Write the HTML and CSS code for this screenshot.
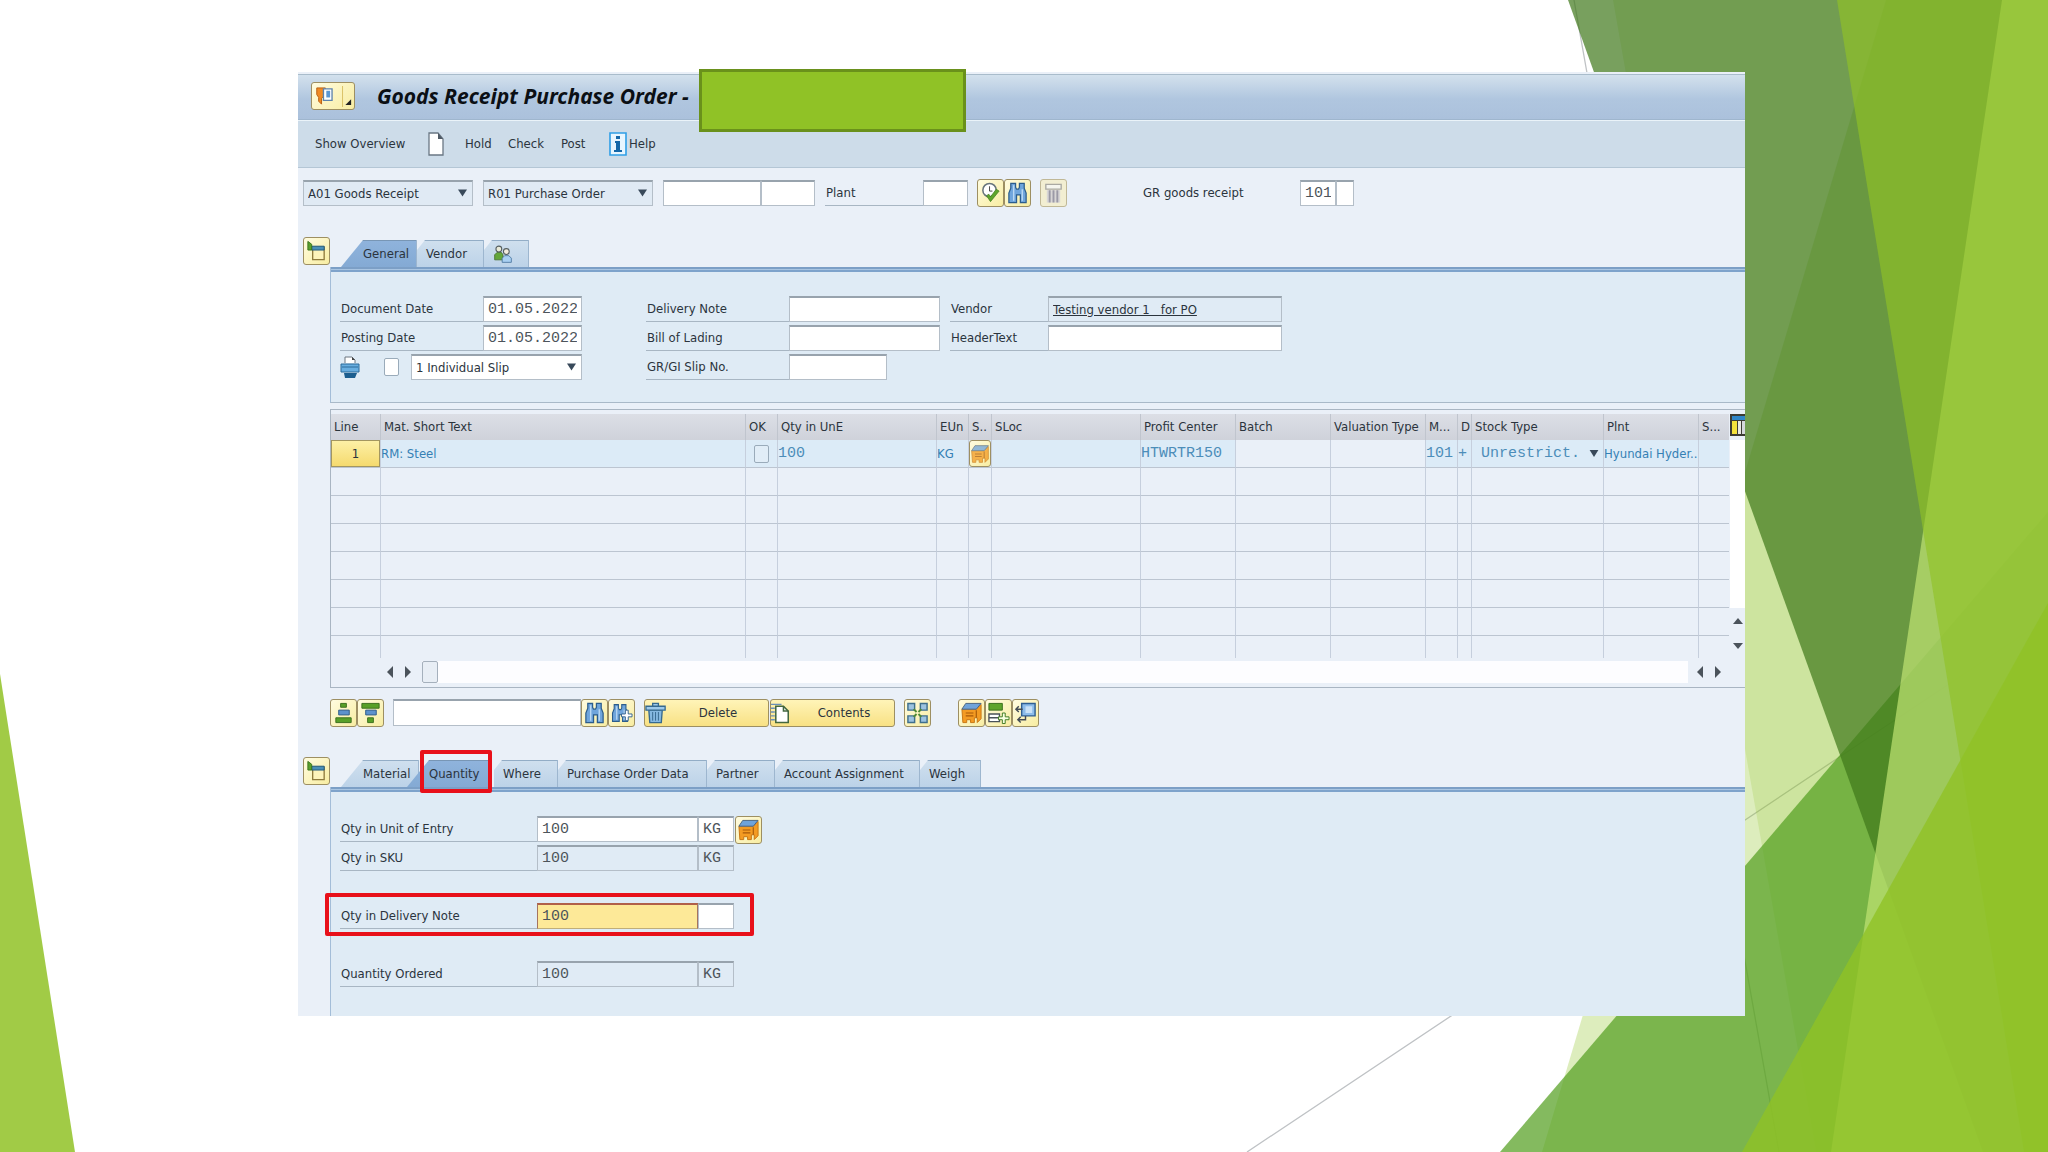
FILE: index.html
```html
<!DOCTYPE html>
<html lang="en">
<head>
<meta charset="utf-8">
<title>Goods Receipt Purchase Order</title>
<link rel="stylesheet" href="styles.css">
</head>
<body>
<svg class="defs" aria-hidden="true">
  <symbol id="i-binoc" viewBox="0 0 24 24"><path d="M5 2h5v4l1 2h2l1-2V2h5v5l2 5v10h-6v-8h-4v8H3V12l2-5z" fill="#6fa5dc" stroke="#2c5d8c" stroke-width="1.3"/><path d="M8 4v16M17 8v12" stroke="#b9d8f3" stroke-width="1.5"/></symbol>
  <symbol id="i-box" viewBox="0 0 24 24"><path d="M2 8h15l5-5v15l-4 4v-5h-3v5h-4v-3H7v3H3z" fill="#f49b22" stroke="#c87512"/><path d="M2 8l4-6h16l-5 6z" fill="#6fa3da" stroke="#49637f"/><path d="M6 12h8M6 15h8M17 9v8" stroke="#a85a08" stroke-width="1.2"/></symbol>
  <symbol id="i-folder" viewBox="0 0 24 24"><path d="M8 8h12v13H8z" fill="#fdf3ba" stroke="#8f7b3d" stroke-width="1.4"/><path d="M7 7h13v4H7z" fill="#4a8fb8" stroke="#245b7a"/><path d="M3 2l4 3v6H3z" fill="#5aa02c" stroke="#3a741c"/></symbol>
</svg>

<svg class="backdrop" viewBox="0 0 2048 1152" preserveAspectRatio="none" aria-hidden="true">
  <g stroke="#bfc2c5" stroke-width="1.3"><path d="M1574 0L1779 1152M1247 1152L2048 618"/></g>
  <path d="M1886 0H2048V1152H1542z" fill="#90c226" fill-opacity=".3"/>
  <path d="M1613 0H2048V1152H1816z" fill="#90c226" fill-opacity=".2"/>
  <path d="M1500 1152H2048V512z" fill="#54a021" fill-opacity=".72"/>
  <path d="M1568 0H2048V1152H1983z" fill="#3f7819" fill-opacity=".7"/>
  <path d="M2002 0H2048V1152H1831z" fill="#c0e474" fill-opacity=".7"/>
  <path d="M1837 0H2048V1152H2024z" fill="#90c226" fill-opacity=".65"/>
  <path d="M1742 1152H2048V603z" fill="#90c226" fill-opacity=".8"/>
  <path d="M0 674L75 1152H0z" fill="#90c226" fill-opacity=".85"/>
</svg>

<main class="window">
  <header class="titlebar">
    <button class="ybtn menu-btn" aria-label="Services"><svg viewBox="0 0 44 24"><path d="M5 3h9v7l-4 4v6l-3-3v-4L5 10z" fill="#f08a24" stroke="#b85e10"/><path d="M12 4h9v12h-9z" fill="#fff" stroke="#5d83ac" stroke-width="1.4"/><path d="M15 6h4v7h-4z" fill="#5b97d4"/><path d="M32 1v22" stroke="#d8bf62"/><path d="M41 15v6h-6z" fill="#222"/></svg></button>
    <h1>Goods Receipt Purchase Order -</h1>
    <div class="redaction"></div>
  </header>

  <nav class="appbar">
    <button class="link-btn b-overview">Show Overview</button>
    <button class="link-btn b-new" aria-label="New"><svg viewBox="0 0 18 24"><path d="M2 1h9l5 6v16H2z" fill="#fff" stroke="#6a7784" stroke-width="1.3"/><path d="M11 1v6h5z" fill="#4f5a66"/></svg></button>
    <button class="link-btn b-hold">Hold</button>
    <button class="link-btn b-check">Check</button>
    <button class="link-btn b-post">Post</button>
    <button class="link-btn b-help"><svg viewBox="0 0 18 24"><path d="M1 1h16v22H1z" fill="#e8f6ff" stroke="#2f9fe6" stroke-width="1.6"/><path d="M7 4h4v3H7zM6 9h5v9h2v2H5v-2h2v-7H6z" fill="#1467a8"/></svg>Help</button>
  </nav>

  <section class="selector">
    <select class="fld drop w170" aria-label="Action"><option>A01 Goods Receipt</option></select>
    <select class="fld drop w170" aria-label="Reference"><option>R01 Purchase Order</option></select>
    <div class="pair"><input class="fld w98" aria-label="Order"><input class="fld w54" aria-label="Item"></div>
    <div class="lined plant"><label for="plant">Plant</label><input class="fld" id="plant"></div>
    <div class="pair tools">
      <button class="ybtn" aria-label="Execute"><svg viewBox="0 0 24 24"><circle cx="11" cy="9" r="7" fill="#fff" stroke="#68757c" stroke-width="1.6"/><path d="M11 5v5h3" fill="none" stroke="#444"/><path d="M8 15l4 6 9-11-3-2-6 8-2-3z" fill="#5fa52c" stroke="#3d7a1b" stroke-width=".7"/></svg></button>
      <button class="ybtn" aria-label="Find"><svg><use href="#i-binoc"/></svg></button>
    </div>
    <button class="ybtn dim" aria-label="Delete entry"><svg viewBox="0 0 24 24"><path d="M4 3h16v5H4z" fill="#f5f5ee" stroke="#aaa9a2" stroke-width="1.4"/><path d="M5 9h14v13H5z" fill="#d8d6d6"/><path d="M8 9v13M12 9v13M16 9v13" stroke="#9b99a6" stroke-width="2"/></svg></button>
    <label class="gr" for="mvt">GR goods receipt</label>
    <div class="pair"><input class="fld mono w36" id="mvt" value="101"><input class="fld w18" aria-label="Special stock"></div>
  </section>

  <div class="tabrow">
    <button class="ybtn" aria-label="Collapse header"><svg><use href="#i-folder"/></svg></button>
    <div class="tabs" role="tablist">
      <button class="tab first active t-general" role="tab">General</button>
      <button class="tab t-vendor" role="tab">Vendor</button>
      <button class="tab t-icon" role="tab" aria-label="Partners"><svg viewBox="0 0 24 24"><path d="M2 13l3-3h5l2 3v6H2z" fill="#63a63a" stroke="#48702f"/><circle cx="7" cy="6" r="3.5" fill="#e9ead8" stroke="#555f60" stroke-width="1.3"/><path d="M11 17l3-3h5l3 3v5H11z" fill="#a9d0f2" stroke="#47749c"/><circle cx="16" cy="9" r="3.5" fill="#f2ecdc" stroke="#555f60" stroke-width="1.3"/></svg></button>
    </div>
  </div>
  <section class="group header-group">
    <div class="stack s1">
      <div class="lined"><label for="dd">Document Date</label><input class="fld mono" id="dd" value="01.05.2022"></div>
      <div class="lined"><label for="pd">Posting Date</label><input class="fld mono" id="pd" value="01.05.2022"></div>
      <div class="slip">
        <svg viewBox="0 0 20 24"><path d="M5 8V2h7l3 3v3" fill="#fff" stroke="#6c7680"/><path d="M12 2v3h3z" fill="#444"/><path d="M1 9h18v8H1z" fill="#68aee0" stroke="#2b6b9a"/><path d="M2 12h16" stroke="#2b6b9a"/><path d="M4 18h13l-2 5H5z" fill="#1c5e8f"/></svg>
        <input type="checkbox" class="tick" aria-label="Print">
        <select class="fld drop white" aria-label="Slip type"><option>1 Individual Slip</option></select>
      </div>
    </div>
    <div class="stack s2">
      <div class="lined"><label for="dn">Delivery Note</label><input class="fld" id="dn"></div>
      <div class="lined"><label for="bl">Bill of Lading</label><input class="fld" id="bl"></div>
      <div class="lined short"><label for="gs">GR/GI Slip No.</label><input class="fld" id="gs"></div>
    </div>
    <div class="stack s3">
      <div class="lined"><label for="vn">Vendor</label><input class="fld ro under" id="vn" readonly value="Testing vendor 1   for PO"></div>
      <div class="lined"><label for="ht">HeaderText</label><input class="fld" id="ht"></div>
    </div>
  </section>

  <section class="grid-box">
    <div class="grid-top">
      <table class="items">
        <colgroup><col class="c49"><col><col class="c32"><col class="c159"><col class="c32"><col class="c23"><col class="c149"><col class="c95"><col class="c95"><col class="c95"><col class="c32"><col class="c14"><col class="c132"><col class="c95"><col class="c30"></colgroup>
        <thead><tr><th>Line</th><th>Mat. Short Text</th><th>OK</th><th>Qty in UnE</th><th>EUn</th><th>S..</th><th>SLoc</th><th>Profit Center</th><th>Batch</th><th>Valuation Type</th><th>M...</th><th>D</th><th>Stock Type</th><th>Plnt</th><th>S...</th></tr></thead>
        <tbody>
          <tr class="filled"><td class="rowhead"><button>1</button></td><td>RM: Steel</td><td><input type="checkbox" class="tick small" aria-label="Item OK"></td><td class="mono">100</td><td>KG</td><td><button class="ybtn cell-btn" aria-label="Storage"><svg><use href="#i-box"/></svg></button></td><td></td><td class="mono">HTWRTR150</td><td class="open"></td><td class="open"></td><td class="mono">101</td><td class="mono">+</td><td><select class="cell-drop mono" aria-label="Stock type"><option>Unrestrict.</option></select></td><td>Hyundai Hyder..</td><td></td></tr>
          <tr><td></td><td></td><td></td><td></td><td></td><td></td><td></td><td></td><td></td><td></td><td></td><td></td><td></td><td></td><td></td></tr>
          <tr><td></td><td></td><td></td><td></td><td></td><td></td><td></td><td></td><td></td><td></td><td></td><td></td><td></td><td></td><td></td></tr>
          <tr><td></td><td></td><td></td><td></td><td></td><td></td><td></td><td></td><td></td><td></td><td></td><td></td><td></td><td></td><td></td></tr>
          <tr><td></td><td></td><td></td><td></td><td></td><td></td><td></td><td></td><td></td><td></td><td></td><td></td><td></td><td></td><td></td></tr>
          <tr><td></td><td></td><td></td><td></td><td></td><td></td><td></td><td></td><td></td><td></td><td></td><td></td><td></td><td></td><td></td></tr>
          <tr><td></td><td></td><td></td><td></td><td></td><td></td><td></td><td></td><td></td><td></td><td></td><td></td><td></td><td></td><td></td></tr>
          <tr class="last"><td></td><td></td><td></td><td></td><td></td><td></td><td></td><td></td><td></td><td></td><td></td><td></td><td></td><td></td><td></td></tr>
        </tbody>
      </table>
      <div class="vscroll">
        <button class="cfg" aria-label="Configure"><svg viewBox="0 0 15 22" preserveAspectRatio="none"><path d="M0 0h15v22H0z" fill="#3c3c34"/><path d="M2 2h13v4H2z" fill="#2f86c8"/><path d="M2 7h5v13H2z" fill="#f4e23c"/><path d="M8 7h3v13H8z" fill="#e9e9e4"/><path d="M12 7h3v13h-3z" fill="#d5d8dc"/></svg></button>
        <div class="track"></div>
        <button class="arr" aria-label="Up"><svg viewBox="0 0 10 8"><path d="M0 7h10L5 1z" fill="#4b535b"/></svg></button>
        <button class="arr" aria-label="Down"><svg viewBox="0 0 10 8"><path d="M0 1h10L5 7z" fill="#4b535b"/></svg></button>
      </div>
    </div>
    <div class="hscroll">
      <button class="arr" aria-label="First"><svg viewBox="0 0 8 12"><path d="M7 0v12L1 6z" fill="#4b535b"/></svg></button>
      <button class="arr" aria-label="Next"><svg viewBox="0 0 8 12"><path d="M1 0v12l6-6z" fill="#4b535b"/></svg></button>
      <div class="track"><div class="thumb"></div></div>
      <button class="arr" aria-label="Left"><svg viewBox="0 0 8 12"><path d="M7 0v12L1 6z" fill="#4b535b"/></svg></button>
      <button class="arr" aria-label="Right"><svg viewBox="0 0 8 12"><path d="M1 0v12l6-6z" fill="#4b535b"/></svg></button>
    </div>
  </section>

  <section class="actions">
    <div class="pair tight">
      <button class="ybtn" aria-label="Sort ascending"><svg viewBox="0 0 24 24"><path d="M9 2h6v4H9zM4 17h16v5H4z" fill="#58a028" stroke="#3b6f1d"/><path d="M7 9h11v5H7z" fill="#5d92cd" stroke="#2d5b8a"/></svg></button>
      <button class="ybtn" aria-label="Sort descending"><svg viewBox="0 0 24 24"><path d="M3 2h18v5H3zM9 17h6v5H9z" fill="#58a028" stroke="#3b6f1d"/><path d="M7 9h11v5H7z" fill="#5d92cd" stroke="#2d5b8a"/></svg></button>
    </div>
    <div class="pair tight">
      <input class="fld w188" aria-label="Search items">
      <button class="ybtn" aria-label="Find"><svg><use href="#i-binoc"/></svg></button>
      <button class="ybtn" aria-label="Find next"><svg viewBox="0 0 24 24"><use href="#i-binoc" width="21" height="24"/><path d="M16 9h3v4h4v3h-4v4h-3v-4h-4v-3h4z" fill="#fff" stroke="#35648f"/></svg></button>
    </div>
    <div class="pair big">
      <button class="ybtn wide"><svg viewBox="0 0 24 24"><path d="M4 9h14l-1 13H5z" fill="#85b8e0" stroke="#36698f" stroke-width="1.4"/><path d="M1 5h20v4H1zM8 2h6v3H8z" fill="#9dc9ea" stroke="#36698f" stroke-width="1.4"/><path d="M8 11v9M11 11v9M14 11v9" stroke="#36698f"/></svg><span>Delete</span></button>
      <button class="ybtn wide"><svg viewBox="0 0 24 24"><path d="M0 3h11M0 7h4M0 11h4M0 15h4M0 19h4" stroke="#6a90ba" stroke-width="1.5"/><path d="M5 5h8l5 5v12H5z" fill="#fff" stroke="#43673f" stroke-width="1.6"/><path d="M13 5v5h5" fill="none" stroke="#43673f" stroke-width="1.6"/></svg><span>Contents</span></button>
    </div>
    <button class="ybtn" aria-label="Split"><svg viewBox="0 0 24 24"><path d="M2 2h7v7H2zM15 2h7v7h-7zM2 15h7v7H2zM15 15h7v7h-7z" fill="#9cc3e0" stroke="#3f6f8c" stroke-width="1.5"/><path d="M8 8l3 3M16 8l-3 3M8 16l3-3M16 16l-3-3" stroke="#4f8a35" stroke-width="2"/></svg></button>
    <div class="pair tight far">
      <button class="ybtn" aria-label="Stock"><svg><use href="#i-box"/></svg></button>
      <button class="ybtn" aria-label="Add line"><svg viewBox="0 0 24 24"><path d="M2 2h14v7H2z" fill="#5fa52c" stroke="#3b6f1d"/><path d="M2 13h11v8H2zM2 17h10" fill="#fff" stroke="#4a5258" stroke-width="1.4"/><path d="M16 12h3v4h4v3h-4v4h-3v-4h-4v-3h4z" fill="#f6ffe0" stroke="#3f7a20"/></svg></button>
      <button class="ybtn" aria-label="Distribute"><svg viewBox="0 0 24 24"><path d="M8 2h14v13H8z" fill="#8cbcea" stroke="#2f5f92" stroke-width="1.5"/><path d="M12 5h7v7h-7z" fill="#c8e1f7"/><path d="M9 8H2m3-3L2 8l3 3M12 15v4H4m3-3l-3 3 3 3" fill="none" stroke="#444c54" stroke-width="1.5"/></svg></button>
    </div>
  </section>

  <div class="tabrow">
    <button class="ybtn" aria-label="Collapse detail"><svg><use href="#i-folder"/></svg></button>
    <div class="tabs" role="tablist">
      <button class="tab first t-material" role="tab">Material</button>
      <div class="marked"><button class="tab first active t-quantity" role="tab">Quantity</button></div>
      <button class="tab t-where" role="tab">Where</button>
      <button class="tab t-po" role="tab">Purchase Order Data</button>
      <button class="tab t-partner" role="tab">Partner</button>
      <button class="tab t-account" role="tab">Account Assignment</button>
      <button class="tab t-weigh" role="tab">Weigh</button>
    </div>
  </div>
  <section class="group detail-group">
    <div class="qty"><div class="lined"><label for="q1">Qty in Unit of Entry</label><input class="fld mono" id="q1" value="100"><input class="fld mono unit" aria-label="Unit" value="KG"></div><button class="ybtn" aria-label="Stock overview"><svg><use href="#i-box"/></svg></button></div>
    <div class="qty"><div class="lined"><label for="q2">Qty in SKU</label><input class="fld mono ro" id="q2" readonly value="100"><input class="fld mono unit ro" readonly aria-label="SKU unit" value="KG"></div></div>
    <div class="qty apart focus"><div class="lined"><label for="q3">Qty in Delivery Note</label><input class="fld mono hot" id="q3" value="100"><input class="fld mono unit" aria-label="Delivery unit"></div></div>
    <div class="qty apart"><div class="lined"><label for="q4">Quantity Ordered</label><input class="fld mono ro" id="q4" readonly value="100"><input class="fld mono unit ro" readonly aria-label="Ordered unit" value="KG"></div></div>
  </section>
</main>
</body>
</html>
```

FILE: styles.css
```css
*, *::before, *::after { box-sizing: border-box; }
body {
  margin: 0;
  min-height: 100vh;
  padding: 72px 303px 0 298px;
  background: #fff;
  position: relative;
  overflow-x: hidden;
  font: 13px/18px "DejaVu Sans Condensed", "DejaVu Sans", sans-serif;
  color: #2b343d;
}
button, input, select { font: inherit; color: inherit; margin: 0; }
button { padding: 0; border: 0; background: none; }
svg { display: block; flex: none; }
.defs { position: absolute; width: 0; height: 0; }
.backdrop { position: absolute; left: 0; top: 0; width: 100%; height: 100%; }
.mono { font-family: "Liberation Mono", monospace; font-size: 15px; color: #4d545b; }

.window { position: relative; background: #eaf0f8; white-space: nowrap; padding-top: 2px; }

/* title and application bar */
.titlebar {
  display: flex; align-items: center; position: relative;
  height: 46px; padding: 0 0 2px 13px;
  border-top: 1px solid #a9bccb; border-bottom: 1px solid #9fb6ce;
  background: linear-gradient(#d3e1ed, #b0c6df 55%, #abc1dc);
}
.titlebar h1 {
  margin: 0 0 0 22px;
  font: italic bold 21px/28px "Noto Sans", "Open Sans", sans-serif;
  color: #0b0f14;
}
.redaction {
  position: absolute; left: 401px; top: -6px; width: 267px; height: 63px;
  background: #90c226; border: 3px solid #6a911b; z-index: 2;
}
.menu-btn.ybtn { width: 44px; }
.menu-btn.ybtn svg { width: 42px; height: 25px; }
.appbar {
  display: flex; align-items: center; height: 48px; padding-left: 17px;
  border-top: 1px solid #eaf3f9; border-bottom: 1px solid #b4c6d5; background: #cddce9;
}
.link-btn { display: flex; align-items: center; text-align: left; gap: 2px; }
.link-btn svg { width: 18px; height: 24px; }
.b-overview { width: 112px; }
.b-new { width: 38px; }
.b-hold { width: 43px; }
.b-check { width: 53px; }
.b-post { width: 48px; }

/* fields */
.fld {
  height: 26px; padding: 0 4px; min-width: 0; border-radius: 0;
  background: #fff; border: 1px solid #b4bec8; border-top: 2px solid #98a3ad;
  outline: 0;
}
.ro { background: #e0ebf5; }
.under { text-decoration: underline; }
.drop {
  appearance: none; padding: 0 20px 0 4px;
  background: #e0eaf4 url("data:image/svg+xml,%3Csvg xmlns='http://www.w3.org/2000/svg' viewBox='0 0 10 8'%3E%3Cpath d='M0 0h10L5 8z' fill='%2338495a'/%3E%3C/svg%3E") no-repeat right 5px top 7px / 9px 8px;
}
.drop.white { background-color: #fff; }
.w170 { width: 170px; }
.w98 { width: 98px; }
.w54 { width: 54px; }
.w36 { width: 36px; }
.w18 { width: 18px; }
.w188 { width: 188px; }
.pair { display: flex; }
.lined { display: flex; height: 26px; border-bottom: 1px solid #a8b6c3; }
.lined label { flex: none; padding: 4px 0 0 1px; }
.tick {
  appearance: none; width: 15px; height: 18px; background: #fff;
  border: 1px solid #9aabba; border-radius: 2px;
}
.tick.small { background: #e1edf7; display: block; margin: 0 auto; }

/* yellow buttons */
.ybtn {
  display: flex; align-items: center; justify-content: center;
  width: 27px; height: 28px; flex: none;
  background: linear-gradient(135deg, #fffce0, #f8eda2);
  border: 1px solid #9d8f62; border-radius: 3px;
}
.ybtn svg { width: 23px; height: 24px; }
.dim { background: #f2eed2; border-color: #c0b897; }
.wide { width: 125px; justify-content: flex-start; background: linear-gradient(#fff4b8, #f8e184); }
.wide span { flex: 1; text-align: center; }

.selector { display: flex; align-items: center; height: 28px; margin-top: 11px; padding-left: 5px; }
.selector .drop + .drop { margin: 0 10px; }
.plant { width: 143px; margin: 0 9px 0 10px; }
.plant label { width: 98px; }
.plant .fld { width: 45px; height: 26px; }
.tools { margin-right: 9px; }
.gr { margin-left: 76px; width: 157px; }

/* tabs */
.tabrow { display: flex; align-items: flex-start; height: 30px; margin-top: 30px; padding-left: 5px; }
.tabs { display: flex; align-items: flex-end; height: 30px; margin-left: 11px; }
.tab {
  height: 27px; text-align: left; padding-left: 9px; flex: none;
  background: linear-gradient(#93adc6 1px, #cfdfee 1px, #bcd2e8);
  border-right: 1px solid #9db6cf;
  clip-path: polygon(8px 0, 100% 0, 100% 100%, 0 100%, 0 10px);
}
.tab.first { padding-left: 22px; clip-path: polygon(22px 0, 100% 0, 100% 100%, 0 100%); }
.tab.active { background: linear-gradient(#7896b5 1px, #8fb3dc 1px, #84aad4); }
.t-general { width: 76px; }
.t-vendor { width: 67px; }
.t-icon { width: 45px; }
.t-icon svg { width: 20px; height: 22px; }
.t-material { width: 78px; }
.marked { position: relative; margin: 0 2px 0 -12px; height: 27px; }
.marked::after {
  content: ""; position: absolute; left: 13px; top: -10px; width: 72px; height: 43px;
  border: 4px solid #e8101a; border-radius: 2px; z-index: 2;
}
.t-quantity { width: 85px; }
.t-where { width: 64px; }
.t-po { width: 149px; }
.t-partner { width: 68px; }
.t-account { width: 145px; }
.t-weigh { width: 61px; }

/* groups */
.group {
  margin-left: 32px; background: #dfebf5;
  border-left: 1px solid #a3bdd8;
}
.group::before {
  content: ""; display: block; height: 5px;
  background: linear-gradient(#7c9fc6 2px, #a9c5e2 2px 3px, #7ea3cb 3px);
}
.header-group {
  display: grid; grid-template-columns: 305px 294px 332px 1fr; column-gap: 10px;
  padding-bottom: 22px; border-bottom: 1px solid #a9b9c8;
}
.header-group::before { grid-column: 1 / -1; margin-bottom: 24px; }
.stack { display: flex; flex-direction: column; gap: 3px; }
.s1 { width: 251px; padding-left: 9px; }
.s1 label { width: 143px; }
.s2 label { width: 143px; }
.s3 label { width: 98px; }
.stack .fld { flex: 1; }
.short { width: 241px; }
.slip { display: flex; align-items: center; height: 26px; }
.slip svg { width: 20px; height: 24px; margin-right: 24px; }
.slip .tick { margin-right: 12px; }

/* item table */
.grid-box {
  margin: 6px 0 0 32px; padding-top: 4px;
  border: 1px solid #a9b5c2; border-right: 0;
}
.grid-top { display: flex; }
.items { flex: 1; table-layout: fixed; border-collapse: separate; border-spacing: 0; width: 100%; }
.items th {
  height: 26px; padding: 0 0 0 3px; font-weight: normal; text-align: left; overflow: hidden;
  background: linear-gradient(#dcdfe6, #cfd2da); border-right: 1px solid #c0c5ce;
}
.items td {
  height: 28px; padding: 0; overflow: hidden;
  border-right: 1px solid #c6cfdd; border-bottom: 1px solid #bcc5d1;
}
.items th:last-child, .items td:last-child { border-right: 0; }
.filled { background: #dcebf7; color: #3580b4; }
.filled .mono { color: #4c8db9; }
.open { background: #eaf0f8; }
.items .last td { height: 22px; border-bottom: 0; }
.rowhead button {
  display: block; width: 49px; height: 27px; color: #2b343d;
  background: linear-gradient(#fdf0a6, #f5da6e); border: 1px solid #a39660;
}
.cell-btn.ybtn { width: 22px; height: 27px; }
.cell-btn.ybtn svg { width: 20px; opacity: .75; }
.cell-drop {
  appearance: none; display: block; width: 100%; height: 24px; border: 0; padding: 0 16px 0 9px;
  background: url("data:image/svg+xml,%3Csvg xmlns='http://www.w3.org/2000/svg' viewBox='0 0 10 8'%3E%3Cpath d='M0 0h10L5 8z' fill='%2338495a'/%3E%3C/svg%3E") no-repeat right 4px center / 10px 7px;
}
.c49 { width: 50px; }
.c32 { width: 32px; }
.c159 { width: 159px; }
.c23 { width: 23px; }
.c149 { width: 149px; }
.c95 { width: 95px; }
.c14 { width: 14px; }
.c132 { width: 132px; }
.c30 { width: 30px; }
.vscroll { display: flex; flex-direction: column; width: 15px; margin-left: 1px; }
.cfg svg { width: 15px; height: 22px; margin-bottom: 4px; }
.vscroll .track { flex: 1; background: #fff; }
.vscroll .arr { height: 25px; padding-left: 3px; }
.vscroll .arr svg { width: 10px; height: 8px; }
.hscroll { display: flex; align-items: center; margin: 3px 0 4px; padding: 0 13px 0 55px; height: 22px; }
.hscroll .arr { width: 18px; }
.hscroll .arr svg { width: 8px; height: 12px; }
.hscroll .track { flex: 1; height: 22px; margin-right: 8px; background: #fdfdff; }
.thumb { width: 16px; height: 22px; background: #e8eef5; border: 1px solid #a5b0bc; border-radius: 2px; }

.actions { display: flex; align-items: center; height: 28px; margin: 11px 0 0 32px; }
.tight .fld { height: 27px; }
.actions .tight + .tight { margin: 0 9px; }
.actions .big { gap: 1px; margin-right: 9px; }
.actions .far { margin-left: 27px; }

/* quantity rows */
.detail-group { padding-bottom: 29px; }
.detail-group::before { margin-bottom: 24px; }
.qty { display: flex; gap: 1px; height: 26px; margin: 0 0 3px 9px; position: relative; }
.qty:last-child { margin-bottom: 0; }
.qty .lined { width: 394px; }
.qty label { width: 197px; }
.qty .fld { width: 161px; }
.qty .fld.unit { width: 36px; }
.qty.apart { margin-top: 32px; }
.hot.fld { background: #fde998; border-color: #b0604a #a5735f #c0ae78; }
.focus::after {
  content: ""; position: absolute; left: -15px; top: -10px; width: 429px; height: 43px;
  border: 4px solid #e8101a; border-radius: 2px; pointer-events: none;
}
```
